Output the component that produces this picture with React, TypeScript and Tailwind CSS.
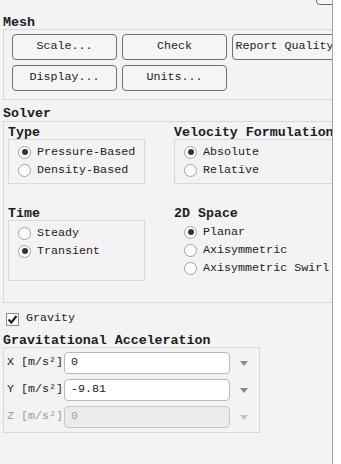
import React from "react";

const F = { fontFamily: '"Liberation Mono", "DejaVu Sans Mono", monospace' };

function Radio({ checked, label }: { checked?: boolean; label: string }) {
  return (
    <div className="flex h-[18px] items-center pl-[9px]">
      <div className="flex h-[13px] w-[13px] items-center justify-center rounded-full border border-[#a2a2a2] bg-white">
        {checked && <div className="h-[6px] w-[6px] rounded-full bg-[#333]" />}
      </div>
      <span className="ml-[6px] text-[11.7px] leading-[14px] text-[#222] whitespace-nowrap">{label}</span>
    </div>
  );
}

function Btn({ label }: { label: string }) {
  return (
    <div className="flex h-[26px] w-[105px] shrink-0 items-center justify-center rounded-[4px] border border-[#707070] bg-[#f5f5f5] text-[11.7px] text-[#222] whitespace-nowrap">
      {label}
    </div>
  );
}

function Header({ children }: { children: React.ReactNode }) {
  return (
    <div className="h-[14px] pt-[2px] text-[13.3px] font-bold leading-[12px] text-[#1e1e1e] whitespace-nowrap">
      {children}
    </div>
  );
}

function Arrow({ disabled }: { disabled?: boolean }) {
  return (
    <svg width="8" height="5" viewBox="0 0 8 5" className="ml-[10px]">
      <path d="M0 0 L8 0 L4 5 Z" fill={disabled ? "#c4c4c4" : "#8a8a8a"} />
    </svg>
  );
}

function Field({ axis, value, disabled }: { axis: string; value: string; disabled?: boolean }) {
  return (
    <div className="flex h-[22px] items-center">
      <span className={"w-[57px] text-[11.7px] whitespace-nowrap " + (disabled ? "text-[#9a9a9a]" : "text-[#222]")}>
        {axis} [m/s²]
      </span>
      <div
        className={
          "flex h-[22px] w-[166px] items-center rounded-[4px] border pl-[6px] text-[11.7px] " +
          (disabled ? "border-[#c8c8c8] bg-[#ebebeb] text-[#a0a0a0]" : "border-[#b9b9b9] bg-white text-[#222]")
        }
      >
        {value}
      </div>
      <Arrow disabled={disabled} />
    </div>
  );
}

export default function App() {
  return (
    <div className="flex h-[464px] w-[341px] overflow-hidden bg-white" style={F}>
      <div className="h-full w-[332px] shrink-0 overflow-hidden bg-[#f3f3f3] pl-[3px]">
        {/* top strip with partially visible button */}
        <div className="flex h-[6px] justify-end overflow-hidden">
          <div className="-mt-[15px] -mr-[4px] h-[20px] w-[20px] shrink-0 rounded-[4px] border border-[#6a6a6a] bg-[#f5f5f5]" />
        </div>

        {/* Mesh */}
        <div className="mt-[7px] h-[16px] pt-[3px] text-[13.3px] font-bold leading-[13px] text-[#1e1e1e]">Mesh</div>
        <div className="w-[360px] border-y border-l border-[#d3d8e2] pb-[8px] pl-[8px] pt-[4px]">
          <div className="flex gap-[5px]">
            <Btn label="Scale..." />
            <Btn label="Check" />
            <Btn label="Report Quality" />
          </div>
          <div className="mt-[5px] flex gap-[5px]">
            <Btn label="Display..." />
            <Btn label="Units..." />
          </div>
        </div>

        {/* Solver */}
        <div className="mt-[5px] h-[16px] pt-[2px] text-[13.3px] font-bold leading-[14px] text-[#1e1e1e]">Solver</div>
        <div className="w-[360px] border-y border-l border-[#d3d8e2] pb-[21px] pl-[4px] pt-[3px]">
          <div className="flex">
            <div className="w-[166px] shrink-0">
              <Header>Type</Header>
              <div className="h-[45px] w-[137px] border border-[#d3d8e2] pt-[3px]">
                <Radio checked label="Pressure-Based" />
                <Radio label="Density-Based" />
              </div>
            </div>
            <div className="flex-1">
              <Header>Velocity Formulation</Header>
              <div className="h-[45px] w-[200px] border border-[#d3d8e2] pt-[3px]">
                <Radio checked label="Absolute" />
                <Radio label="Relative" />
              </div>
            </div>
          </div>
          <div className="mt-[22px] flex">
            <div className="w-[166px] shrink-0">
              <Header>Time</Header>
              <div className="h-[61px] w-[137px] border border-[#d3d8e2] pt-[3px]">
                <Radio label="Steady" />
                <Radio checked label="Transient" />
              </div>
            </div>
            <div className="flex-1">
              <Header>2D Space</Header>
              <div className="border border-transparent pt-[2px]">
                <Radio checked label="Planar" />
                <Radio label="Axisymmetric" />
                <Radio label="Axisymmetric Swirl" />
              </div>
            </div>
          </div>
        </div>

        {/* Gravity */}
        <div className="mt-[7px] flex h-[18px] items-center pl-[3px]">
          <div className="flex h-[13px] w-[13px] items-center justify-center border border-[#8e8e8e] bg-white">
            <svg width="11" height="11" viewBox="0 0 11 11">
              <path d="M1.5 5.5 L4.3 8.5 L9.5 2" fill="none" stroke="#222" strokeWidth="2.2" />
            </svg>
          </div>
          <span className="ml-[7px] text-[11.7px] text-[#222]">Gravity</span>
        </div>
        <div className="mt-[6px] h-[13px] pt-[1px] text-[13.3px] font-bold leading-[12px] text-[#1e1e1e] whitespace-nowrap">
          Gravitational Acceleration
        </div>
        <div className="flex w-[257px] flex-col gap-[5px] border border-[#d3d8e2] pb-[4px] pl-[3px] pt-[4px]">
          <Field axis="X" value="0" />
          <Field axis="Y" value="-9.81" />
          <Field axis="Z" value="0" disabled />
        </div>
      </div>
      <div className="h-full w-px shrink-0 bg-[#a8a8a8]" />
      <div className="h-full flex-1 bg-white" />
    </div>
  );
}
